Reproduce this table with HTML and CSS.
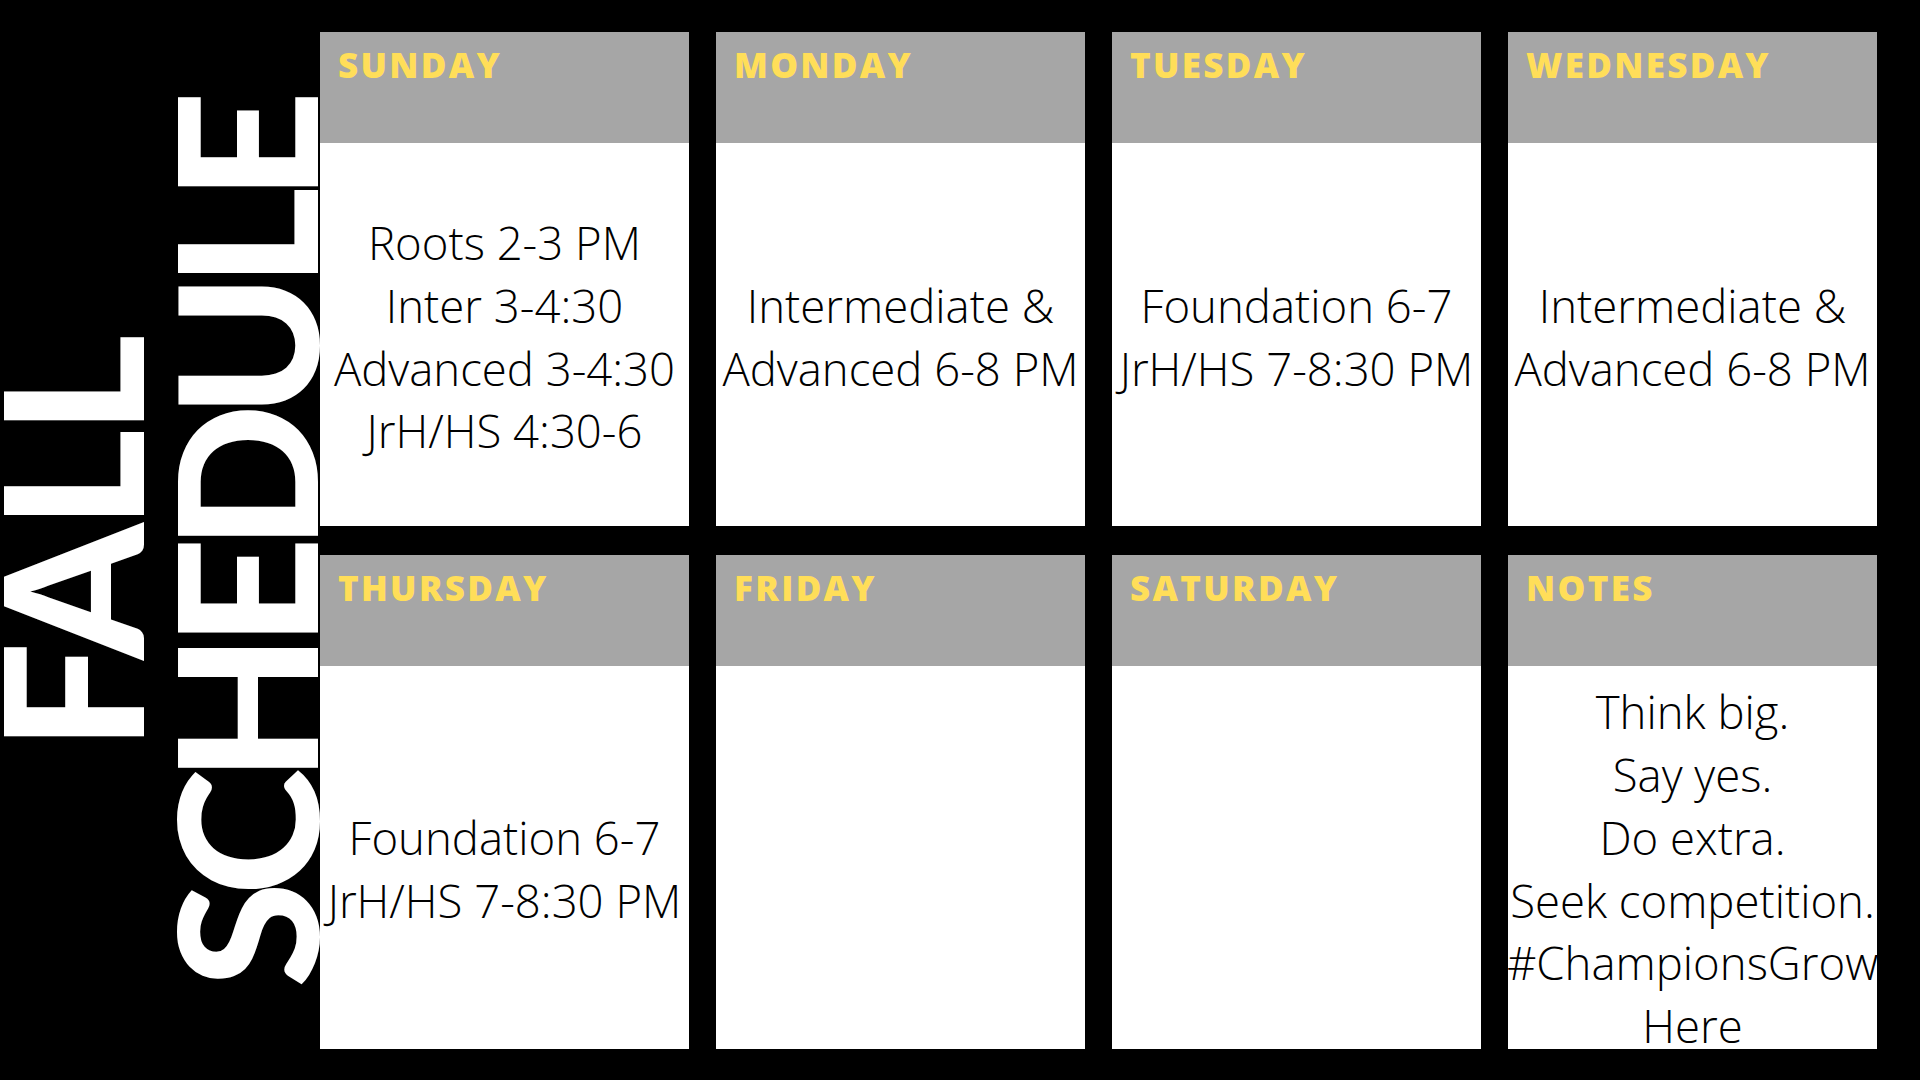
FILE: index.html
```html
<!DOCTYPE html>
<html lang="en">
<head>
<meta charset="utf-8">
<title>Fall Schedule</title>
<link rel="stylesheet" href="styles.css">
</head>
<body>
<div class="page">
  <div class="title-col">
    <h1 class="title"><span class="title-fall">FALL</span><br><span class="title-schedule">SCHEDULE</span></h1>
  </div>
  <div class="grid">
    <section class="card">
      <div class="card-head"><h2 class="day">SUNDAY</h2></div>
      <div class="card-body"><p class="text">Roots 2-3 PM<br>Inter 3-4:30<br>Advanced 3-4:30<br>JrH/HS 4:30-6</p></div>
    </section>
    <section class="card">
      <div class="card-head"><h2 class="day">MONDAY</h2></div>
      <div class="card-body"><p class="text">Intermediate &amp;<br>Advanced 6-8 PM</p></div>
    </section>
    <section class="card">
      <div class="card-head"><h2 class="day">TUESDAY</h2></div>
      <div class="card-body"><p class="text">Foundation 6-7<br>JrH/HS 7-8:30 PM</p></div>
    </section>
    <section class="card">
      <div class="card-head"><h2 class="day">WEDNESDAY</h2></div>
      <div class="card-body"><p class="text">Intermediate &amp;<br>Advanced 6-8 PM</p></div>
    </section>
    <section class="card card-lower">
      <div class="card-head"><h2 class="day">THURSDAY</h2></div>
      <div class="card-body"><p class="text">Foundation 6-7<br>JrH/HS 7-8:30 PM</p></div>
    </section>
    <section class="card card-lower">
      <div class="card-head"><h2 class="day">FRIDAY</h2></div>
      <div class="card-body"></div>
    </section>
    <section class="card card-lower">
      <div class="card-head"><h2 class="day">SATURDAY</h2></div>
      <div class="card-body"></div>
    </section>
    <section class="card card-lower">
      <div class="card-head"><h2 class="day">NOTES</h2></div>
      <div class="card-body"><p class="text">Think big.<br>Say yes.<br>Do extra.<br>Seek competition.<br>#ChampionsGrow<br>Here</p></div>
    </section>
  </div>
</div>
</body>
</html>
```
FILE: styles.css
```css
html, body {
  margin: 0;
  padding: 0;
  background: #000;
}

.page {
  display: flex;
  width: 1920px;
  height: 1080px;
  overflow: hidden;
  background: #000;
}

.title-col {
  flex: none;
  width: 320px;
  height: 1080px;
}

.title {
  writing-mode: vertical-rl;
  transform: rotate(180deg);
  box-sizing: border-box;
  height: 1080px;
  padding-bottom: 12px;
  margin: 0 0 0 -17px;
  font-family: Lato, "Open Sans", sans-serif;
  font-weight: 900;
  font-size: 193px;
  line-height: 174px;
  color: #fff;
  text-align: center;
  white-space: nowrap;
}

.title-fall {
  letter-spacing: -6px;
}

.title-schedule {
  letter-spacing: -14px;
}

.grid {
  position: relative;
  z-index: 1;
  display: grid;
  grid-template-columns: repeat(4, 369px);
  grid-template-rows: repeat(2, 494px);
  column-gap: 27px;
  row-gap: 29px;
  padding-top: 32px;
}

.card {
  display: flex;
  flex-direction: column;
  min-height: 0;
  background: #fff;
  overflow: hidden;
}

.card-head {
  flex: none;
  height: 111px;
  box-sizing: border-box;
  padding: 15px 18px 0;
  background: #a6a6a6;
}

.day {
  margin: 0;
  font-family: "Open Sans", sans-serif;
  font-weight: 800;
  font-size: 35px;
  line-height: 1;
  letter-spacing: 2.3px;
  color: #ffde59;
}

.card-body {
  flex: 1;
  min-height: 0;
  display: flex;
  align-items: center;
  justify-content: center;
  box-sizing: border-box;
  padding-top: 4px;
}

.card-lower .card-body {
  padding-top: 22px;
}

.text {
  margin: 0;
  font-family: "Open Sans", sans-serif;
  font-weight: 300;
  font-size: 45.5px;
  line-height: 62.7px;
  color: #000;
  text-align: center;
  white-space: nowrap;
}
```
